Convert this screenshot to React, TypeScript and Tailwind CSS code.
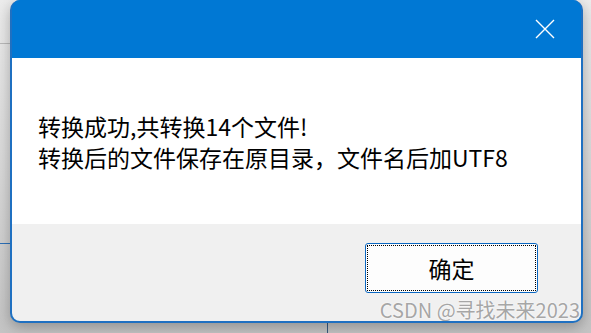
import React from 'react';

const font = '"Microsoft YaHei", "Noto Sans CJK SC", "Noto Sans", sans-serif';

function CloseIcon() {
  return (
    <svg width="20" height="20" viewBox="0 0 20 20" fill="none">
      <path d="M1 1L19 19M19 1L1 19" stroke="white" strokeWidth="1.4" />
    </svg>
  );
}

export default function App() {
  return (
    <div
      className="relative w-[591px] h-[333px] overflow-hidden bg-gradient-to-b from-[#ececec] via-[#d9d9d9] to-[#c4c4c4]"
      style={{ fontFamily: font }}
    >
      {/* bits of the window behind the dialog */}
      <div className="absolute left-0 top-[43px] w-[12px] h-px bg-[#b9b9b9]" />
      <div className="absolute left-0 top-[243px] w-[12px] h-px bg-[#2c70b8]" />
      <div className="absolute left-[327px] top-[320px] w-px h-[13px] bg-[#3a5a80]" />

      <div className="relative flex pl-[10px] pr-[8px]">
        <div className="flex flex-col w-[573px] h-[323px] rounded-[10px] overflow-hidden border-2 border-t-0 border-[#1f70c1] bg-[#0078d4] shadow-[0_4px_14px_rgba(0,0,0,0.28)]">
          <div className="flex h-[58px] justify-end items-center pr-[26px] bg-[#0078d4]">
            <CloseIcon />
          </div>
          <div className="flex flex-col h-[166px] bg-white pl-[26px] pt-[53px] text-[23px] leading-[31px] text-black">
            <div>转换成功,共转换14个文件!</div>
            <div>转换后的文件保存在原目录，文件名后加UTF8</div>
          </div>
          <div className="relative flex flex-1 justify-end bg-[#f0f0f0] pt-[19px] pr-[43px]">
            <button className="flex w-[173px] h-[50px] items-center justify-center rounded-[3px] border border-[#0a67c2] bg-[#fdfdfd] p-[1px]">
              <span className="flex w-full h-full items-center justify-center border border-dotted border-black text-[23px] text-black">
                确定
              </span>
            </button>
            <div className="absolute right-[1px] bottom-[-4px] text-[20px] text-[#a6a6a6] [text-shadow:0_0_2px_#fff,0_0_1px_#fff]">
              CSDN @寻找未来2023
            </div>
          </div>
        </div>
      </div>
    </div>
  );
}
